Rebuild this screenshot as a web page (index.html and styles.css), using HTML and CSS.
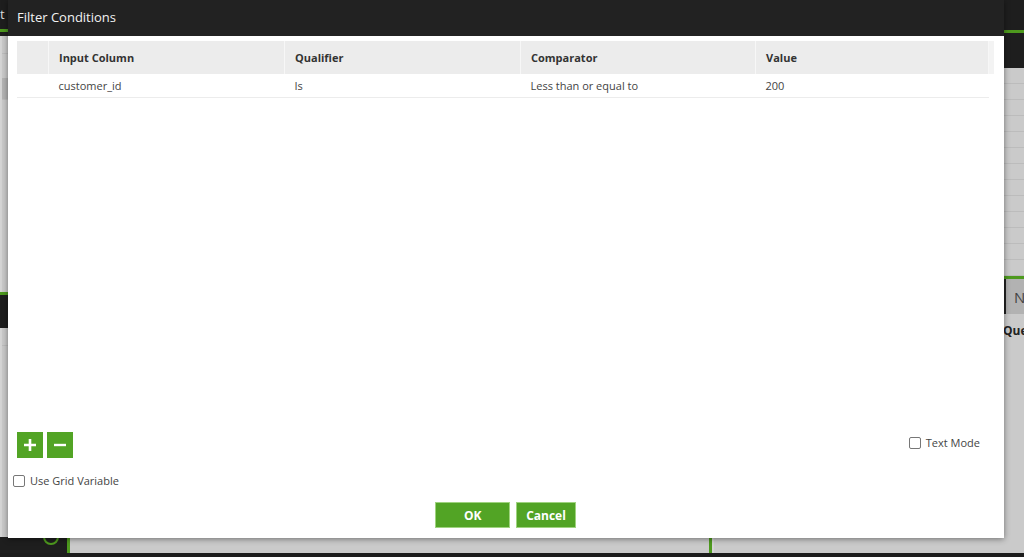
FILE: index.html
```html
<!DOCTYPE html>
<html lang="en">
<head>
    <meta charset="UTF-8">
    <meta name="viewport" content="width=device-width, initial-scale=1.0">
    <title>Filter Conditions</title>
    <link rel="stylesheet" href="styles.css">
</head>
<body>
    <div class="app">
        <div class="col col-left">
            <div class="topbar"><span class="topbar-title">t</span></div>
            <div class="panel-grey">
                <div class="list-row"></div>
                <div class="list-row selected"></div>
            </div>
            <div class="panel-head"></div>
            <div class="panel-grey panel-lower">
                <div class="list-row"></div>
            </div>
            <div class="left-footer">
                <span class="add-icon"></span>
            </div>
        </div>
        <div class="col col-center"></div>
        <div class="col col-right">
            <div class="topbar topbar-tall"></div>
            <div class="grid-rows"></div>
            <div class="tabbar">
                <span class="tab">N</span>
            </div>
            <div class="props-title">Que</div>
            <div class="panel-grey"></div>
        </div>
    </div>

    <div class="modal">
        <div class="modal-header">Filter Conditions</div>
        <div class="modal-body">
            <div class="table-wrap">
                <table class="grid">
                    <thead>
                        <tr>
                            <th class="col-check"></th>
                            <th class="col-input">Input Column</th>
                            <th class="col-qual">Qualifier</th>
                            <th class="col-comp">Comparator</th>
                            <th class="col-value">Value</th>
                            <th class="col-gutter"></th>
                        </tr>
                    </thead>
                    <tbody>
                        <tr>
                            <td></td>
                            <td>customer_id</td>
                            <td>Is</td>
                            <td>Less than or equal to</td>
                            <td>200</td>
                            <td class="no-line"></td>
                        </tr>
                    </tbody>
                </table>
            </div>

            <div class="tools">
                <div class="tool-buttons">
                    <button class="icon-btn" title="Add">
                        <svg width="14" height="14" viewBox="0 0 14 14"><path d="M7 1v12M1 7h12" stroke="#fff" stroke-width="2.6" fill="none"/></svg>
                    </button>
                    <button class="icon-btn" title="Remove">
                        <svg width="14" height="14" viewBox="0 0 14 14"><path d="M1 7h12" stroke="#fff" stroke-width="2.4" fill="none"/></svg>
                    </button>
                </div>
                <label class="check text-mode"><input type="checkbox"> Text Mode</label>
            </div>

            <label class="check grid-var"><input type="checkbox"> Use Grid Variable</label>

            <div class="footer">
                <button class="btn btn-ok">OK</button>
                <button class="btn">Cancel</button>
            </div>
        </div>
    </div>
</body>
</html>
```

FILE: styles.css
```css
body {
    margin: 0;
    width: 1024px;
    height: 557px;
    overflow: hidden;
    background-color: #1c1c1c;
    font-family: "Open Sans", "Liberation Sans", sans-serif;
    position: relative;
}

/* background application */
.app {
    display: flex;
    height: 553px;
}

.col {
    display: flex;
    flex-direction: column;
    min-width: 0;
}

.col-left {
    width: 67px;
    flex-shrink: 0;
}

.col-center {
    width: 639px;
    flex-shrink: 0;
    background-color: #cacaca;
    border-left: 3px solid #4e9a1e;
    border-right: 3px solid #4e9a1e;
}

.col-right {
    flex: 1;
    background-color: #cacaca;
    overflow: hidden;
}

.topbar {
    height: 36px;
    flex-shrink: 0;
    background: linear-gradient(to bottom, #1e1e1e 29px, #4e9a1e 29px, #4e9a1e 32px, #1e1e1e 32px);
    color: #ddd;
    font-size: 13px;
}

.topbar-title {
    display: block;
    padding: 5px 0 0 0;
}

.topbar-tall {
    height: 68px;
    background: linear-gradient(to bottom, #1e1e1e 30px, #4e9a1e 30px, #4e9a1e 33px, #1e1e1e 33px);
}

.panel-grey {
    flex: 1;
    background-color: #cacaca;
    border-left: 2px solid #d4d4d4;
}

.list-row {
    height: 17px;
    border-bottom: 1px solid #bdbdbd;
}

.list-row.selected {
    margin-top: 24px;
    height: 21px;
    background-color: #b4b4b4;
}

.panel-head {
    height: 33px;
    flex-shrink: 0;
    background-color: #1e1e1e;
    border-top: 3px solid #4e9a1e;
}

.panel-lower {
    flex: none;
    height: 209px;
}

.left-footer {
    height: 16px;
    flex-shrink: 0;
    background-color: #1e1e1e;
    display: flex;
    justify-content: flex-end;
    padding-right: 8px;
}

.add-icon {
    width: 12px;
    height: 12px;
    margin-top: -8px;
    border-radius: 50%;
    border: 2px solid #4e9a1e;
}

.grid-rows {
    height: 208px;
    flex-shrink: 0;
    background: repeating-linear-gradient(to bottom, #cacaca 0, #cacaca 15px, #bcbcbc 15px, #bcbcbc 16px);
    border-left: 2px solid #d4d4d4;
}

.tabbar {
    height: 35px;
    flex-shrink: 0;
    border-top: 3px solid #4e9a1e;
    background-color: #c2c2c2;
    display: flex;
    padding-left: 292px;
}

.tab {
    padding: 8px 12px 0 8px;
    background-color: #b2b2b2;
    border-left: 2px solid #222;
    color: #444;
    font-size: 15px;
}

.props-title {
    padding: 8px 0 0 291px;
    height: 22px;
    flex-shrink: 0;
    font-size: 12px;
    font-weight: bold;
    color: #222;
}

/* modal */
.modal {
    position: absolute;
    left: 8px;
    top: 0;
    width: 996px;
    height: 538px;
    background-color: #fff;
    box-shadow: 0 1px 6px rgba(0, 0, 0, 0.45);
    display: flex;
    flex-direction: column;
}

.modal-header {
    height: 36px;
    box-sizing: border-box;
    padding: 8px 0 0 9px;
    background-color: #222;
    color: #f2f2f2;
    font-size: 13px;
}

.modal-body {
    flex: 1;
    display: flex;
    flex-direction: column;
    padding: 5px 10px 10px 9px;
    color: #333;
    font-size: 11px;
}

.table-wrap {
    flex: 1;
}

.grid {
    border-collapse: collapse;
    width: 977px;
    table-layout: fixed;
}

.grid th {
    height: 33px;
    padding: 0 0 0 10px;
    background-color: #ececec;
    border-right: 1px solid #f7f7f7;
    text-align: left;
    font-weight: bold;
    color: #333;
    font-size: 11px;
}

.grid td {
    height: 23px;
    padding: 0 0 0 10px;
    border-bottom: 1px solid #ececec;
    color: #444;
    font-size: 11px;
}

.grid td.no-line {
    border-bottom: none;
}

.col-check { width: 21px; }
.col-input { width: 225px; }
.col-qual { width: 225px; }
.col-comp { width: 224px; }
.col-value { width: 222px; }

.grid th.col-gutter {
    width: 5px;
    padding: 0;
    background-color: #f3f3f3;
    border-right: none;
}

.tools {
    height: 26px;
    display: flex;
    justify-content: space-between;
    align-items: flex-start;
    padding-right: 14px;
}

.tool-buttons {
    display: flex;
    gap: 4px;
}

.icon-btn {
    width: 26px;
    height: 26px;
    padding: 0;
    border: none;
    background-color: #52a425;
    display: flex;
    align-items: center;
    justify-content: center;
    cursor: pointer;
}

.check {
    display: flex;
    align-items: center;
    gap: 5px;
    color: #444;
    font-size: 11px;
    line-height: 16px;
}

.check input {
    appearance: none;
    width: 12px;
    height: 12px;
    margin: 0;
    border: 1px solid #777;
    border-radius: 2px;
    background-color: #fff;
}

.text-mode {
    margin-top: 3px;
}

.grid-var {
    margin: 15px 0 0 -4px;
    height: 16px;
}

.footer {
    margin-top: 13px;
    display: flex;
    justify-content: center;
    gap: 6px;
}

.btn {
    height: 26px;
    padding: 0 9px;
    border: 1px solid #9fd37f;
    background-color: #52a425;
    color: #fff;
    font-family: "Open Sans", "Liberation Sans", sans-serif;
    font-size: 12px;
    font-weight: bold;
    cursor: pointer;
}

.btn-ok {
    width: 75px;
}
```
